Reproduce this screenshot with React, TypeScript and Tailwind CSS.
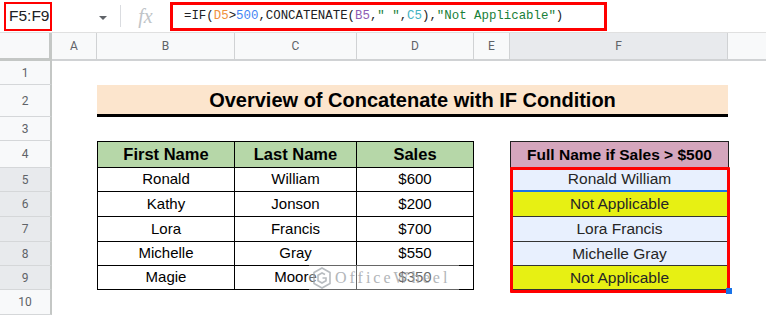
import React from "react";

const W = { a: 45, b: 138, c: 122, d: 117, e: 36, f: 218 };

const people = [
  { first: "Ronald", last: "William", sales: "$600", full: "Ronald William", yes: true },
  { first: "Kathy", last: "Jonson", sales: "$200", full: "Not Applicable", yes: false },
  { first: "Lora", last: "Francis", sales: "$700", full: "Lora Francis", yes: true },
  { first: "Michelle", last: "Gray", sales: "$550", full: "Michelle Gray", yes: true },
  { first: "Magie", last: "Moore", sales: "$350", full: "Not Applicable", yes: false },
];

const heights = [24, 32, 24, 27, 24, 25, 25, 24, 24, 25];

const RowHead = ({ n, sel }: { n: number; sel?: boolean }) => (
  <div
    className={`w-[52px] shrink-0 h-full flex items-center justify-center border-r-2 border-b border-r-[#c4c7c5] border-b-[#d5d7d9] text-[12px] text-[#5f6368] ${
      sel ? "bg-[#e8eaed]" : "bg-[#f8f9fa]"
    }`}
    style={{ fontFamily: "Roboto, sans-serif" }}
  >
    {n}
  </div>
);

const Row = ({ n, sel, children }: { n: number; sel?: boolean; children?: React.ReactNode }) => (
  <div className="flex" style={{ height: heights[n - 1] }}>
    <RowHead n={n} sel={sel} />
    {children}
  </div>
);

const Formula = () => (
  <span>
    <span className="text-[#202124]">=IF(</span>
    <span className="text-[#f0903c]">D5</span>
    <span className="text-[#202124]">&gt;</span>
    <span className="text-[#4285f4]">500</span>
    <span className="text-[#202124]">,CONCATENATE(</span>
    <span className="text-[#8e5cb5]">B5</span>
    <span className="text-[#202124]">,</span>
    <span className="text-[#188038]">" "</span>
    <span className="text-[#202124]">,</span>
    <span className="text-[#44b3c2]">C5</span>
    <span className="text-[#202124]">),</span>
    <span className="text-[#188038]">"Not Applicable"</span>
    <span className="text-[#202124]">)</span>
  </span>
);

export default function App() {
  return (
    <div
      className="relative w-[766px] h-[318px] overflow-hidden bg-white text-[#000]"
      style={{ fontFamily: "Arial, 'Liberation Sans', sans-serif" }}
    >
      {/* formula bar */}
      <div className="flex items-center h-[33px] border-b border-[#e0e0e0]">
        <div className="ml-[4px] w-[48px] h-[29px] border-2 border-[#ff0000] flex items-center pl-[3px] text-[15.5px] text-[#202124]">
          F5:F9
        </div>
        <div className="w-[68px] flex justify-end pr-[13px] pt-[3px]">
          <div className="w-0 h-0 border-l-[4px] border-r-[4px] border-t-[4px] border-l-transparent border-r-transparent border-t-[#5f6368]" />
        </div>
        <div className="w-px h-[22px] bg-[#dadce0]" />
        <div
          className="w-[49px] text-center text-[20px] italic text-[#c0c4c8]"
          style={{ fontFamily: "'Liberation Serif', serif" }}
        >
          fx
        </div>
        <div
          className="w-[437px] h-[29px] border-[3px] border-[#ff0000] flex items-center pl-[11px] text-[12.4px]"
          style={{ fontFamily: "'Liberation Mono', monospace" }}
        >
          <Formula />
        </div>
      </div>

      {/* column headers */}
      <div className="flex h-[28px] text-[12px] text-[#5f6368]" style={{ fontFamily: "Roboto, sans-serif" }}>
        <div className="w-[52px] shrink-0 bg-[#f8f9fa] border-r-[3px] border-b-[3px] border-[#c4c7c5]" />
        {[
          ["A", W.a],
          ["B", W.b],
          ["C", W.c],
          ["D", W.d],
          ["E", W.e],
          ["F", W.f],
        ].map(([l, w]) => (
          <div
            key={l as string}
            className={`shrink-0 flex items-center justify-center border-r border-b-2 border-[#d0d2d4] ${
              l === "F" ? "bg-[#e8eaed]" : "bg-[#f8f9fa]"
            }`}
            style={{ width: w as number }}
          >
            {l}
          </div>
        ))}
        <div className="flex-1 bg-[#f8f9fa] border-b-2 border-[#d0d2d4]" />
      </div>

      <Row n={1} />
      <Row n={2}>
        <div className="shrink-0" style={{ width: W.a }} />
        <div className="w-[631px] shrink-0 bg-[#fce5cd] border-b-[3px] border-black flex items-center justify-center text-[20px] font-bold">
          Overview of Concatenate with IF Condition
        </div>
      </Row>
      <Row n={3} />
      <Row n={4}>
        <div className="shrink-0" style={{ width: W.a }} />
        <div className="flex shrink-0 bg-[#b6d7a8] text-[16.5px] font-bold border-t border-black">
          <div className="w-[138px] border-l border-r border-b border-black flex items-center justify-center">First Name</div>
          <div className="w-[122px] border-r border-b border-black flex items-center justify-center">Last Name</div>
          <div className="w-[117px] border-r border-b border-black flex items-center justify-center">Sales</div>
        </div>
        <div className="shrink-0" style={{ width: W.e }} />
        <div className="w-[219px] shrink-0 bg-[#d5a6bd] border border-[#222] flex items-center justify-center text-[15.5px] font-bold">
          Full Name if Sales &gt; $500
        </div>
      </Row>
      {people.map((p, i) => (
        <Row key={p.first} n={i + 5} sel>
          <div className="shrink-0" style={{ width: W.a }} />
          <div className="flex shrink-0 text-[15px]">
            <div className="w-[138px] border-l border-r border-b border-black flex items-center justify-center">{p.first}</div>
            <div className="w-[122px] border-r border-b border-black flex items-center justify-center">{p.last}</div>
            <div className="w-[117px] border-r border-b border-black flex items-center justify-center">{p.sales}</div>
          </div>
          <div className="shrink-0" style={{ width: W.e }} />
          <div
            className={`w-[219px] shrink-0 flex items-center justify-center text-[15.5px] text-[#262626] border-l border-r border-b ${
              i === 0 ? "border-b-2 border-b-[#1a73e8]" : "border-b-[#333]"
            } border-[#333] ${p.yes ? "bg-[#e8f0fe]" : "bg-[#e7f013]"}`}
          >
            {p.full}
          </div>
        </Row>
      ))}
      <Row n={10} />

      {/* selection outline */}
      <div className="absolute left-[510px] top-[167px] w-[220px] h-[126px] border-[3px] border-[#ff0000] rounded-[1px]" />
      <div className="absolute left-[726px] top-[288px] w-[6px] h-[6px] bg-[#1a73e8]" />

      {/* watermark */}
      <div className="absolute left-[309px] top-[265px] w-[150px] h-[25px] bg-white/40 flex items-center">
        <svg width="20" height="24" viewBox="0 0 20 24" className="ml-[3px] opacity-70">
          <path d="M10 2 L18 6.5 V17.5 L10 22 L2 17.5 V6.5 Z" fill="none" stroke="#9aa0a6" strokeWidth="1.6" />
          <path d="M13 8.5 L10 7 L6 9.2 V14.8 L10 17 L14 14.8 V12 H10.5" fill="none" stroke="#9aa0a6" strokeWidth="1.6" />
        </svg>
        <span
          className="ml-[3px] text-[16px] tracking-[3px] text-[#a0a4a8] opacity-80"
          style={{ fontFamily: "'Liberation Serif', serif" }}
        >
          OfficeWheel
        </span>
      </div>
    </div>
  );
}
